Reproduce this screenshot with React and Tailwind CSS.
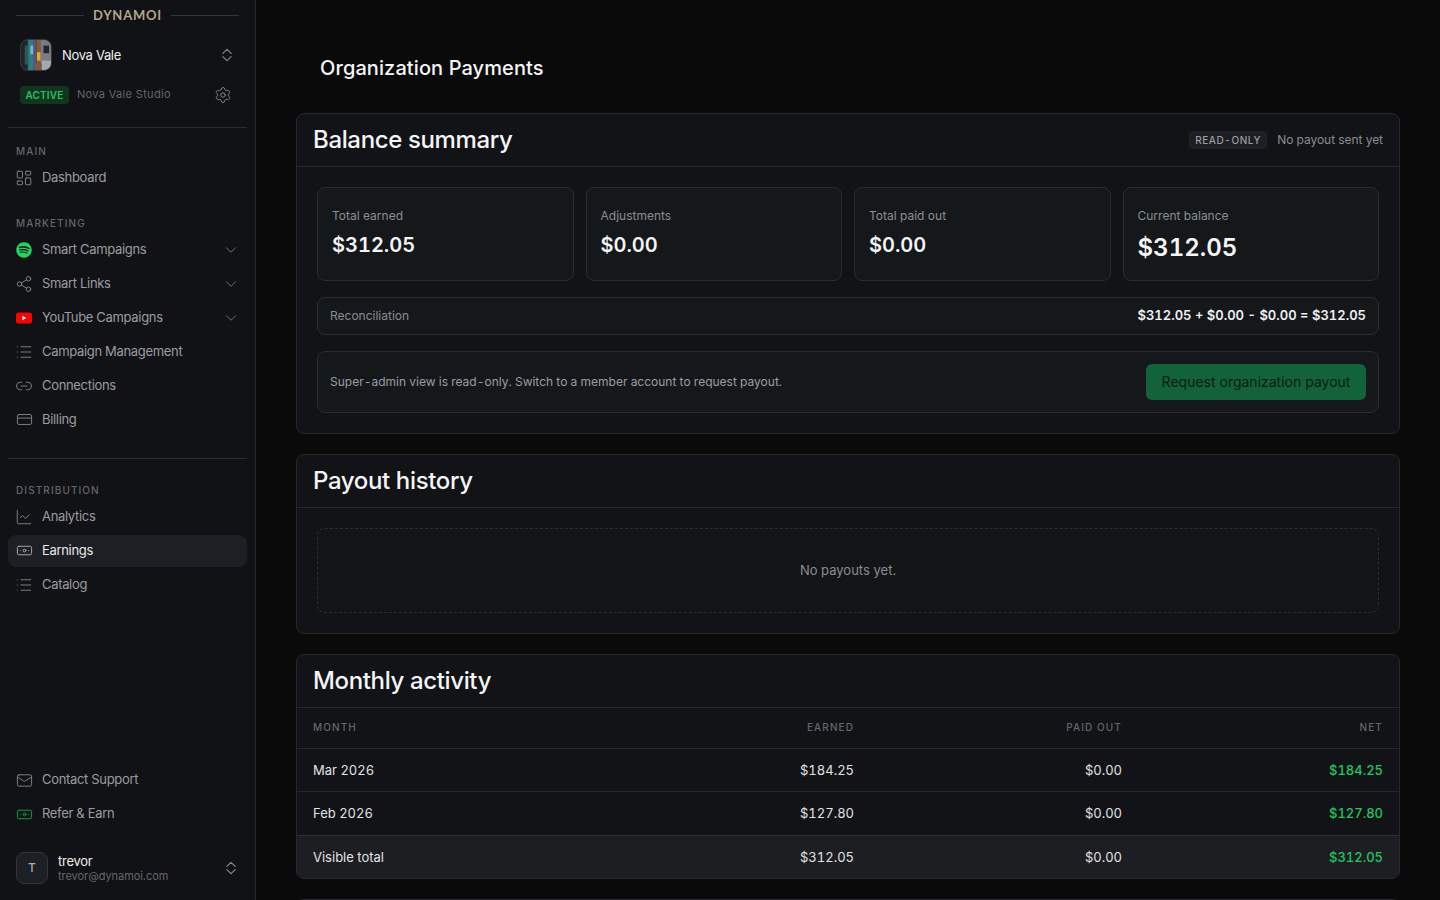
import React from "react";
import { LayoutDashboard, Share2, ChevronDown, Settings, Mail, Banknote, CreditCard, Link2, List, ChartLine } from "lucide-react";
import { FaSpotify } from "react-icons/fa";

function Youtube() {
  return (
    <svg width="16" height="16" viewBox="0 0 16 16" className="shrink-0">
      <rect x="0" y="2.5" width="16" height="11" rx="2.5" fill="#ff0000" />
      <path d="M6.3 5.8 10.2 8 6.3 10.2Z" fill="#fff" />
    </svg>
  );
}

function UpDown({ className }) {
  return (
    <svg width="16" height="16" viewBox="0 0 16 16" fill="none" stroke="currentColor" strokeWidth="1.2" strokeLinecap="round" strokeLinejoin="round" className={className}>
      <path d="M3.8 6.4 8 2.4l4.2 4M3.8 9.6l4.2 4 4.2-4" />
    </svg>
  );
}

function NavRow({ icon, label, chevron, active }) {
  return (
    <div className={`flex h-8 items-center rounded-lg pl-2 pr-2 text-[13px] tracking-[-0.025em] ${active ? "bg-[#1c1f24] text-[#e8e8ea]" : "text-[#9b9ca1]"}`}>
      <span className={`flex w-4 shrink-0 items-center justify-center ${active ? "text-[#a9abb0]" : "text-[#808287]"}`}>{icon}</span>
      <span className="mb-[2px] ml-[10px] flex-1 leading-5">{label}</span>
      {chevron && <ChevronDown size={18} strokeWidth={1.3} className="-mr-px text-[#6f7177]" />}
    </div>
  );
}

function SectionLabel({ children }) {
  return <div className="px-2 text-[10px] font-medium uppercase leading-4 tracking-[0.11em] text-[#63666c]">{children}</div>;
}

const ic = { size: 18, strokeWidth: 1.3, className: "shrink-0" };
const ic2 = { size: 17, strokeWidth: 1.35, className: "shrink-0" };

function Sidebar() {
  return (
    <aside className="flex h-[900px] w-[256px] shrink-0 flex-col border-r border-[#26282c] bg-[#111215] px-2">
      <div className="flex h-[31px] items-center gap-[9px] px-2">
        <div className="h-px flex-1 bg-[#33353a]" />
        <span className="font-['Lato',sans-serif] text-[13px] font-bold tracking-[0.06em] text-[#b5a48c]">DYNAMOI</span>
        <div className="h-px flex-1 bg-[#33353a]" />
      </div>
      <div className="mt-2 flex items-center pl-3 pr-3">
        <div className="h-8 w-8 overflow-hidden rounded-lg border border-[#33353a] bg-[#3d4348]">
          <svg viewBox="0 0 32 32" className="h-full w-full">
            <defs>
              <filter id="soft"><feGaussianBlur stdDeviation="0.8" /></filter>
            </defs>
            <rect width="32" height="32" fill="#4a4f56" />
            <g filter="url(#soft)">
              <rect x="-2" y="-2" width="9" height="36" fill="#1f262c" />
              <rect x="4" y="6" width="4" height="20" fill="#2f5560" />
              <rect x="8" y="-2" width="6" height="36" fill="#2a7f85" />
              <rect x="10" y="6" width="4" height="9" fill="#5ec4c4" />
              <rect x="13" y="-2" width="3" height="36" fill="#5f4f80" />
              <rect x="17" y="-2" width="4" height="36" fill="#8a5a2a" />
              <rect x="17" y="13" width="4" height="9" fill="#eaa62e" />
              <rect x="21" y="-2" width="13" height="36" fill="#777d85" />
              <rect x="24" y="6" width="6" height="8" fill="#24282d" />
              <rect x="22" y="22" width="10" height="10" fill="#a4a9ae" />
              <rect x="15" y="25" width="7" height="9" fill="#7d584a" />
            </g>
          </svg>
        </div>
        <span className="ml-[10px] flex-1 text-[13px] leading-5 tracking-[-0.025em] text-[#f0f0f2]">Nova Vale</span>
        <UpDown className="text-[#85878d]" />
      </div>
      <div className="mt-[15px] flex items-center pl-3 pr-4">
        <span className="flex h-[18px] w-[49px] items-center justify-center rounded bg-[#11351f] text-[10px] font-semibold leading-none tracking-[0.02em] text-[#22c55e]">ACTIVE</span>
        <span className="mb-[2px] ml-2 flex-1 text-[11px] tracking-[0.03em] text-[#63666c]">Nova Vale Studio</span>
        <Settings {...ic} className="-mr-px text-[#85878d]" />
      </div>
      <div className="mt-[22px] h-px bg-[#2a2c30]" />
      <div className="mt-[15px]"><SectionLabel>Main</SectionLabel></div>
      <div className="mt-[3px]">
        <NavRow icon={<LayoutDashboard {...ic} />} label="Dashboard" />
      </div>
      <div className="mt-[21px]"><SectionLabel>Marketing</SectionLabel></div>
      <div className="mt-[3px] flex flex-col gap-[2px]">
        <NavRow icon={<FaSpotify size={16} className="text-[#1ed760]" />} label="Smart Campaigns" chevron />
        <NavRow icon={<Share2 {...ic} />} label="Smart Links" chevron />
        <NavRow icon={<Youtube />} label="YouTube Campaigns" chevron />
        <NavRow icon={<List {...ic} />} label="Campaign Management" />
        <NavRow icon={<Link2 {...ic} />} label="Connections" />
        <NavRow icon={<CreditCard {...ic2} />} label="Billing" />
      </div>
      <div className="mt-[22px] h-px bg-[#2a2c30]" />
      <div className="mt-[23px]"><SectionLabel>Distribution</SectionLabel></div>
      <div className="mt-[3px] flex flex-col gap-[2px]">
        <NavRow icon={<ChartLine {...ic} />} label="Analytics" />
        <NavRow active icon={<Banknote {...ic2} />} label="Earnings" />
        <NavRow icon={<List {...ic} />} label="Catalog" />
      </div>
      <div className="mt-auto flex flex-col gap-[2px]">
        <NavRow icon={<Mail {...ic2} />} label="Contact Support" />
        <NavRow icon={<Banknote size={17} strokeWidth={1.35} className="shrink-0 text-[#16a34a]" />} label="Refer & Earn" />
      </div>
      <div className="mb-4 mt-[22px] flex items-center px-2">
        <div className="flex h-8 w-8 items-center justify-center rounded-lg border border-[#33353a] bg-[#1c1f24] text-xs font-medium text-[#a9abb0]">T</div>
        <div className="ml-[10px] flex-1 pt-[2px]">
          <div className="text-[13px] leading-[15px] tracking-[-0.02em] text-[#f0f0f2]">trevor</div>
          <div className="text-[11px] leading-[15px] tracking-[-0.005em] text-[#63666c]">trevor@dynamoi.com</div>
        </div>
        <UpDown className="text-[#85878d]" />
      </div>
    </aside>
  );
}

function Card({ children }) {
  return <section className="rounded-lg border border-[#26282c] bg-[#111316]">{children}</section>;
}

function CardHeader({ title, right }) {
  return (
    <div className="flex h-[53px] items-center justify-between border-b border-[#26282c] px-4">
      <h2 className="text-2xl font-medium tracking-[-0.015em] text-[#f5f5f6]">{title}</h2>
      {right}
    </div>
  );
}

function Stat({ label, value, big }) {
  return (
    <div className="h-[94px] rounded-lg border border-[#2a2c30] bg-[#15181b] px-[14px] pt-5">
      <div className="text-xs leading-4 text-[#8a8c92]">{label}</div>
      <div className={`font-semibold tabular-nums text-[#f5f5f6] ${big ? "mt-2 text-2xl leading-8" : "mt-[7px] text-xl leading-7"}`}>{value}</div>
    </div>
  );
}

const cols = "grid grid-cols-[305px_268px_268px_1fr] items-center";

function TRow({ m, e, p, n, total, h }) {
  return (
    <div className={`${cols} ${h} border-t text-[13px] tabular-nums text-[#e2e2e4] ${total ? "rounded-b-lg border-[#2e3035] bg-[#1c1e21]" : "border-[#26282c]"}`}>
      <div className="pl-4">{m}</div>
      <div className="pr-4 text-right">{e}</div>
      <div className="pr-4 text-right">{p}</div>
      <div className="pr-4 text-right font-medium text-[#22c55e]">{n}</div>
    </div>
  );
}

export default function App() {
  return (
    <div className="flex h-[900px] overflow-hidden bg-[#0a0a0a] font-['Inter',sans-serif]">
      <Sidebar />
      <main className="h-[900px] flex-1 overflow-hidden px-10">
        <h1 className="ml-6 flex h-[113px] items-center pt-[23px] text-xl font-medium leading-7 tracking-[0.005em] text-[#f5f5f6]">Organization Payments</h1>
        <div className="flex flex-col gap-5">
          <Card>
            <CardHeader
              title="Balance summary"
              right={
                <div className="flex items-center gap-[10px]">
                  <span className="flex h-[18px] items-center rounded bg-[#1c1f24] px-[6px] text-[10px] font-medium tabular-nums tracking-[0.06em] text-[#9b9ca1]">READ-ONLY</span>
                  <span className="text-xs tracking-[-0.005em] text-[#8a8c92]">No payout sent yet</span>
                </div>
              }
            />
            <div className="flex flex-col p-5">
              <div className="grid grid-cols-4 gap-3">
                <Stat label="Total earned" value="$312.05" />
                <Stat label="Adjustments" value="$0.00" />
                <Stat label="Total paid out" value="$0.00" />
                <Stat label="Current balance" value="$312.05" big />
              </div>
              <div className="mt-4 flex h-[38px] items-center justify-between rounded-lg border border-[#2a2c30] bg-[#15181b] px-3">
                <span className="text-xs text-[#8a8c92]">Reconciliation</span>
                <span className="text-[13px] font-semibold tabular-nums text-[#f0f0f2]">$312.05 + $0.00 - $0.00 = $312.05</span>
              </div>
              <div className="mt-4 flex h-[62px] items-center justify-between rounded-lg border border-[#2a2c30] bg-[#15181b] px-3">
                <span className="text-xs tabular-nums text-[#9b9ca1]">Super-admin view is read-only. Switch to a member account to request payout.</span>
                <button className="flex h-9 w-[220px] items-center justify-center rounded-md bg-[#12633a] text-sm text-[#0e1a14]">Request organization payout</button>
              </div>
            </div>
          </Card>
          <Card>
            <CardHeader title="Payout history" />
            <div className="p-5">
              <div className="flex h-[85px] items-center justify-center rounded-lg border border-dashed border-[#2a2c30] bg-[#121417] text-[13px] text-[#8a8c92]">No payouts yet.</div>
            </div>
          </Card>
          <Card>
            <CardHeader title="Monthly activity" />
            <div className={`${cols} h-[40px] pb-[2px] text-[10px] font-medium uppercase tracking-[0.11em] text-[#63666c]`}>
              <div className="pl-4">Month</div>
              <div className="pr-4 text-right">Earned</div>
              <div className="pr-4 text-right">Paid out</div>
              <div className="pr-4 text-right">Net</div>
            </div>
            <TRow h="h-[43px] pt-px" m="Mar 2026" e="$184.25" p="$0.00" n="$184.25" />
            <TRow h="h-[44px]" m="Feb 2026" e="$127.80" p="$0.00" n="$127.80" />
            <TRow h="h-[43px] pt-px" m="Visible total" e="$312.05" p="$0.00" n="$312.05" total />
          </Card>
          <Card>
            <div className="h-20" />
          </Card>
        </div>
      </main>
    </div>
  );
}
